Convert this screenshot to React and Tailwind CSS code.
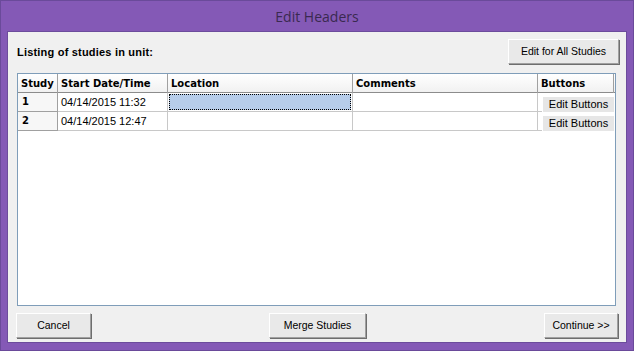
const cols = "grid grid-cols-[40px_110px_185px_185px_76px] grid-rows-[19px] h-[19px]";
const head = "font-['DejaVu_Sans',sans-serif] font-bold text-[10px] leading-none text-black";
const body = "font-['Liberation_Sans',sans-serif] text-[11px] leading-none text-black";

const studies = [
  { id: 1, start: "04/14/2015 11:32" },
  { id: 2, start: "04/14/2015 12:47" },
];

function WinButton({ children, className = "" }) {
  return (
    <button
      className={`h-[25px] bg-[#e9e9e9] border border-t-white border-l-white border-r-[#a0a0a0] border-b-[#a0a0a0] shadow-[1px_1px_0_#6e6e6e] font-['Liberation_Sans',sans-serif] text-[10.5px] text-black ${className}`}
    >
      {children}
    </button>
  );
}

export default function App() {
  return (
    <div className="w-[634px] h-[351px] bg-[#8459b6] border border-[#6a4a9a] flex flex-col px-[6px] pb-[7px]">
      {/* TITLE */}
      <div className="h-[30px] flex items-center justify-center font-['Open_Sans',sans-serif] text-[14px] text-[#3a2950]">
        Edit Headers
      </div>

      {/* CONTENT */}
      <div className="flex-1 bg-[#f0f0f0] border border-[#6c4c9c] flex flex-col px-[8px]">
        <div className="flex justify-between items-end pt-[7px]">
          <span className="ml-[1px] mb-[4px] font-['Liberation_Sans',sans-serif] font-bold text-[11px] tracking-[0.2px] text-black">
            Listing of studies in unit:
          </span>
          <WinButton className="w-[111px] h-[24px] mr-[-1px]">Edit for All Studies</WinButton>
        </div>

        {/* GRID */}
        <div className="mt-[9px] ml-[1px] mr-[2px] h-[233px] bg-white border border-[#7f9db9]">
          <div className={`${cols} bg-gradient-to-b from-white to-[#f1f1f1] border-b border-[#8c8c8c] ${head}`}>
            {["Study", "Start Date/Time", "Location", "Comments", "Buttons"].map((h) => (
              <div key={h} className="border-r border-[#a0a0a0] flex items-center pl-[3px]">
                {h}
              </div>
            ))}
          </div>

          {studies.map((s, i) => (
            <div key={s.id} className={cols}>
              <div className={`border-r border-b border-[#a0a0a0] bg-[#f7f7f7] flex items-center pl-[4px] ${head}`}>
                {s.id}
              </div>
              <div className={`border-r border-b border-[#c8c8c8] flex items-center pl-[3px] ${body}`}>
                {s.start}
              </div>
              <div className="border-r border-b border-[#c8c8c8] relative">
                {i === 0 && (
                  <div className="absolute left-[1px] right-[1px] top-[1px] bottom-[1px] bg-[#b7cdea] border border-dotted border-black" />
                )}
              </div>
              <div className="border-r border-b border-[#c8c8c8]" />
              <div className="border-b border-[#c8c8c8] flex items-start pl-[4px] pt-[3px]">
                <button className={`shrink-0 w-[72px] h-[16px] bg-[#e6e6e6] border-t border-l border-white flex items-center justify-center ${body}`}>
                  Edit Buttons
                </button>
              </div>
            </div>
          ))}
        </div>

        {/* FOOTER */}
        <div className="flex justify-between items-center mt-[7px]">
          <WinButton className="w-[75px]">Cancel</WinButton>
          <WinButton className="w-[97px]">Merge Studies</WinButton>
          <WinButton className="w-[74px]">Continue &gt;&gt;</WinButton>
        </div>
      </div>
    </div>
  );
}
